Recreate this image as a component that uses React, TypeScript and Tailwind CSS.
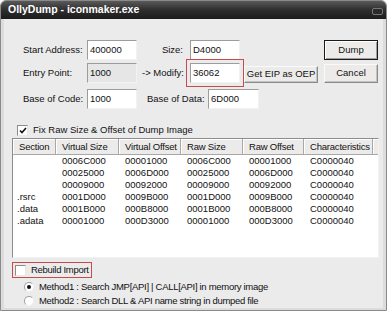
const rows = [
  ["", "0006C000", "00001000", "0006C000", "00001000", "C0000040"],
  ["", "00025000", "0006D000", "00025000", "0006D000", "C0000040"],
  ["", "00009000", "00092000", "00009000", "00092000", "C0000040"],
  [".rsrc", "0001D000", "0009B000", "0001D000", "0009B000", "C0000040"],
  [".data", "0001B000", "000B8000", "0001B000", "000B8000", "C0000040"],
  [".adata", "00001000", "000D3000", "00001000", "000D3000", "C0000040"],
];

const headers = ["Section", "Virtual Size", "Virtual Offset", "Raw Size", "Raw Offset", "Characteristics"];

function Field({ value, readOnly, width = "w-[50px]" }: { value: string; readOnly?: boolean; width?: string }) {
  return (
    <div
      className={`h-[20px] ${width} border border-t-[#9c9c9c] border-l-[#9c9c9c] border-b-[#f2f2f2] border-r-[#f2f2f2] px-[2px] pt-[1px] leading-[15px] ${
        readOnly ? "bg-[#e6e6e6]" : "bg-white"
      }`}
    >
      {value}
    </div>
  );
}

function Button({ label, primary, className = "" }: { label: string; primary?: boolean; className?: string }) {
  return (
    <div
      className={`flex items-center justify-center whitespace-nowrap border bg-[#ecebea] ${
        primary
          ? "border-[#1a1a1a] shadow-[inset_1px_1px_0_#fff,inset_-1px_-1px_0_#a0a0a0]"
          : "border-t-[#fafafa] border-l-[#fafafa] border-b-[#8a8a8a] border-r-[#8a8a8a] shadow-[inset_-1px_-1px_0_#c4c4c4]"
      } ${className}`}
    >
      {label}
    </div>
  );
}

function CheckBox({ checked }: { checked?: boolean }) {
  return (
    <div className="flex h-[11px] w-[11px] shrink-0 items-center justify-center border border-t-[#8c8c8c] border-l-[#8c8c8c] border-b-[#e8e8e8] border-r-[#e8e8e8] bg-white">
      {checked && (
        <svg width="8" height="7" viewBox="0 0 8 7">
          <path d="M1 3.5 L3 5.5 L7 1" stroke="#111" strokeWidth="1.6" fill="none" />
        </svg>
      )}
    </div>
  );
}

function Radio({ checked }: { checked?: boolean }) {
  return (
    <div className="flex h-[10px] w-[10px] shrink-0 items-center justify-center rounded-full border border-t-[#a0a0a0] border-l-[#a0a0a0] border-b-[#f0f0f0] border-r-[#f0f0f0] bg-white">
      {checked && <div className="h-[4px] w-[4px] rounded-full bg-[#111]" />}
    </div>
  );
}

export default function App() {
  return (
    <div className="h-[313px] w-[390px] whitespace-nowrap bg-white font-['Liberation_Sans',Arial,sans-serif] text-[9.5px] text-[#111]">
      <div className="flex h-[311px] w-[387px] flex-col overflow-hidden rounded-t-[6px] border border-[#8a8a8a] bg-[#ebebeb]">
        {/* title bar */}
        <div className="flex h-[18px] shrink-0 items-center justify-between bg-gradient-to-b from-[#5a5a5a] via-[#2e2e2e] to-[#1c1c1c] pl-[7px] pr-[3px]">
          <span className="text-[10.5px] font-bold text-white">OllyDump - iconmaker.exe</span>
          <div className="mt-[3px] h-[7px] w-[11px] rounded-[2px] border border-[#777] bg-[#2a2a2a]" />
        </div>

        <div className="flex flex-1 flex-col border-l-[3px] border-r-[3px] border-b-[3px] border-[#dcdcdc] pt-[21px]">
          {/* row 1 */}
          <div className="flex h-[20px] items-center pl-[19px]">
            <span className="w-[64px]">Start Address:</span>
            <Field value="400000" />
            <span className="w-[53px] pr-[7px] text-right">Size:</span>
            <Field value="D4000" />
            <Button label="Dump" primary className="ml-auto mr-[5px] h-[20px] w-[54px]" />
          </div>

          {/* row 2 */}
          <div className="mt-[3px] flex h-[20px] items-center pl-[19px]">
            <span className="w-[64px]">Entry Point:</span>
            <Field value="1000" readOnly />
            <span className="w-[53px] pr-[6px] text-right">-&gt; Modify:</span>
            <div className="outline outline-1 outline-offset-[3px] outline-[#c84a4a]">
              <Field value="36062" />
            </div>
            <Button label="Get EIP as OEP" className="ml-[4px] mt-[3px] h-[17px] w-[74px]" />
            <Button label="Cancel" className="ml-auto mr-[5px] h-[19px] w-[54px]" />
          </div>

          {/* row 3 */}
          <div className="mt-[6px] flex h-[20px] items-center pl-[19px]">
            <span className="w-[64px]">Base of Code:</span>
            <Field value="1000" />
            <span className="ml-[10px] w-[61px]">Base of Data:</span>
            <Field value="6D000" width="w-[51px]" />
          </div>

          {/* fix raw */}
          <div className="mt-[15px] flex h-[12px] items-center gap-[5px] pl-[13px]">
            <CheckBox checked />
            <span>Fix Raw Size &amp; Offset of Dump Image</span>
          </div>

          {/* list view */}
          <div className="ml-[8px] mt-[2px] h-[120px] w-[367px] overflow-hidden border border-t-[#8c8c8c] border-l-[#8c8c8c] border-b-[#f2f2f2] border-r-[#f2f2f2] bg-white">
            <div className="grid h-[16px] grid-cols-[43px_63px_62px_62px_61px_69px_1fr]">
              {headers.map((h) => (
                <div
                  key={h}
                  className="overflow-hidden border-b border-r border-b-[#a8a8a8] border-r-[#a8a8a8] bg-[#ecebea] pl-[6px] leading-[15px] tracking-[-0.2px] shadow-[inset_1px_1px_0_#fff]"
                >
                  {h}
                </div>
              ))}
              <div className="border-b border-b-[#a8a8a8] bg-[#ecebea] shadow-[inset_1px_1px_0_#fff]" />
            </div>
            {rows.map((r, i) => (
              <div key={i} className="grid h-[12px] grid-cols-[43px_63px_62px_62px_61px_69px_1fr] leading-[12px]">
                {r.map((c, j) => (
                  <div key={j} className={j === 0 ? "pl-[4px]" : "pl-[6px]"}>
                    {c}
                  </div>
                ))}
              </div>
            ))}
          </div>

          {/* rebuild import */}
          <div className="ml-[8px] mt-[4px] flex h-[16px] w-[80px] items-center gap-[5px] border border-[#c84a4a] pl-[2px] tracking-[-0.3px]">
            <CheckBox />
            <span>Rebuild Import</span>
          </div>

          <div className="mt-[2px] flex h-[14px] items-center gap-[5px] pl-[20px] tracking-[-0.3px]">
            <Radio checked />
            <span>Method1 : Search JMP[API] | CALL[API] in memory image</span>
          </div>
          <div className="flex h-[14px] items-center gap-[5px] pl-[20px] tracking-[-0.3px]">
            <Radio />
            <span>Method2 : Search DLL &amp; API name string in dumped file</span>
          </div>
        </div>
      </div>
    </div>
  );
}
